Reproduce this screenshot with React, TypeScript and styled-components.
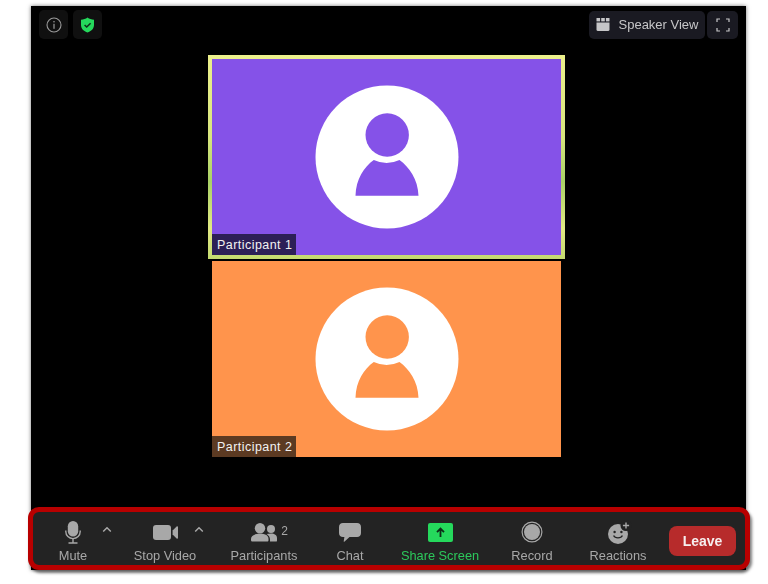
import React from "react";
import styled, { createGlobalStyle } from "styled-components";

const Global = createGlobalStyle`
  html, body { margin: 0; padding: 0; background: #fff; overflow: hidden; }
  body { font-family: "Liberation Sans", Arial, sans-serif; }
`;

const Page = styled.div`
  width: 768px;
  height: 584px;
  padding: 6px 0 0 31px;
  box-sizing: border-box;
  filter: blur(0.3px);
`;

const Window = styled.div`
  width: 715px;
  height: 564px;
  background: #000;
  display: flex;
  flex-direction: column;
  box-shadow: 0 0 4px rgba(0, 0, 0, 0.55);
`;

const TopBar = styled.div`
  display: flex;
  justify-content: space-between;
  padding: 4px 8px 0 8px;
`;

const TopGroup = styled.div`
  display: flex;
  align-items: center;
  gap: 5px;
`;

const TopRightGroup = styled(TopGroup)`
  gap: 2px;
`;

const IconChip = styled.div`
  width: 29px;
  height: 29px;
  border-radius: 5px;
  background: #101010;
  display: flex;
  align-items: center;
  justify-content: center;
`;

const ViewButton = styled.div<{ $w: number }>`
  width: ${(p) => p.$w}px;
  height: 28px;
  border-radius: 5px;
  background: #1a1a22;
  display: flex;
  align-items: center;
  justify-content: center;
  gap: 9px;
  color: #c6c6c8;
  font-size: 13px;
`;

const Stage = styled.div`
  flex: 1;
  display: flex;
  flex-direction: column;
  align-items: center;
  padding: 16px 4px 0 0;
`;

const ActiveFrame = styled.div`
  width: 357px;
  height: 204px;
  padding: 4px;
  box-sizing: border-box;
  background: linear-gradient(180deg, #ecf08c 0%, #d8e67e 40%, #a9d266 62%, #e2ea84 85%, #c4da70 100%);
`;

const Tile = styled.div<{ $bg: string }>`
  position: relative;
  width: 349px;
  height: 196px;
  background: ${(p) => p.$bg};
  display: flex;
  align-items: center;
  justify-content: center;
`;

const PlainTile = styled(Tile)`
  margin-top: 2px;
`;

const Avatar = styled.svg`
  width: 144px;
  height: 144px;
  display: block;
`;

const NameTag = styled.div<{ $bg: string }>`
  position: absolute;
  left: 0;
  bottom: 0;
  height: 21px;
  width: 84px;
  box-sizing: border-box;
  background: ${(p) => p.$bg};
  color: #f2f2f2;
  font-size: 12.5px;
  letter-spacing: 0.45px;
  line-height: 23px;
  padding-left: 5px;
  white-space: nowrap;
`;

const Toolbar = styled.div`
  width: 722px;
  height: 63px;
  margin: 0 0 0 -3px;
  box-sizing: border-box;
  border: 5px solid #b80000;
  border-radius: 11px;
  background: #232323;
  display: flex;
  box-shadow: 2px 3px 3px rgba(0, 0, 0, 0.5);
`;

const Item = styled.div<{ $w: number; $color?: string }>`
  position: relative;
  width: ${(p) => p.$w}px;
  display: flex;
  flex-direction: column;
  align-items: center;
  padding-top: 8px;
  color: ${(p) => p.$color || "#a8a8a8"};
`;

const IconBox = styled.div`
  height: 24px;
  display: flex;
  align-items: center;
  justify-content: center;
`;

const Label = styled.div`
  margin-top: 4px;
  font-size: 12.8px;
  line-height: 15px;
  white-space: nowrap;
`;

const Chevron = styled.svg<{ $left: number }>`
  position: absolute;
  left: ${(p) => p.$left}px;
  top: 14px;
  width: 10px;
  height: 7px;
`;

const Count = styled.span`
  font-size: 12px;
  color: #a8a8a8;
  margin-left: 4px;
  position: relative;
  top: -1px;
`;

const LeaveButton = styled.div`
  width: 67px;
  height: 30px;
  margin: 14px 0 0 6px;
  border-radius: 8px;
  background: #b72b2b;
  color: #f6eeee;
  font-size: 14px;
  font-weight: 700;
  display: flex;
  align-items: center;
  justify-content: center;
`;

const Person = ({ color }: { color: string }) => (
  <Avatar viewBox="0 0 144 144">
    <circle cx="72" cy="72" r="71.5" fill="#fff" />
    <circle cx="72.2" cy="50" r="21.7" fill={color} />
    <path
      d="M40.5 110.7C41 94 49 82 58.8 75Q71.6 81 84.5 75C94 82 103 94 103.5 110.7Z"
      fill={color}
    />
  </Avatar>
);

const Up = ({ left }: { left: number }) => (
  <Chevron $left={left} viewBox="0 0 10 7">
    <path d="M1.2 5.5L5 1.8L8.8 5.5" fill="none" stroke="#a8a8a8" strokeWidth="1.5" />
  </Chevron>
);

export default function App() {
  return (
    <>
      <Global />
      <Page>
        <Window>
          <TopBar>
            <TopGroup>
              <IconChip>
                <svg width="16" height="16" viewBox="0 0 16 16" fill="none">
                  <circle cx="8" cy="8" r="7" stroke="#9a9a9a" strokeWidth="1.1" />
                  <rect x="7.4" y="6.8" width="1.2" height="5" fill="#9a9a9a" />
                  <circle cx="8" cy="4.8" r="0.8" fill="#9a9a9a" />
                </svg>
              </IconChip>
              <IconChip>
                <svg width="15" height="16" viewBox="0 0 15 16">
                  <path
                    d="M7.5 0.6C9.3 2 11.6 2.7 14 2.8V8C14 11.6 11.2 14.3 7.5 15.6C3.8 14.3 1 11.6 1 8V2.8C3.4 2.7 5.7 2 7.5 0.6Z"
                    fill="#25d95c"
                  />
                  <path d="M4.6 8L6.7 10L10.6 6.2" fill="none" stroke="#10301c" strokeWidth="1.6" />
                </svg>
              </IconChip>
            </TopGroup>
            <TopRightGroup>
              <ViewButton $w={116}>
                <svg width="14" height="13" viewBox="0 0 14 13" fill="#c6c6c8">
                  <rect x="0.5" y="0" width="3.6" height="3.4" />
                  <rect x="5.2" y="0" width="3.6" height="3.4" />
                  <rect x="9.9" y="0" width="3.6" height="3.4" />
                  <path d="M0.5 4.6H13.5V11.5Q13.5 13 12 13H2Q0.5 13 0.5 11.5Z" />
                </svg>
                <span>Speaker View</span>
              </ViewButton>
              <ViewButton $w={31}>
                <svg width="14" height="14" viewBox="0 0 14 14" fill="none" stroke="#c6c6c8" strokeWidth="1.2">
                  <path d="M1 4V1H4M10 1H13V4M13 10V13H10M4 13H1V10" />
                </svg>
              </ViewButton>
            </TopRightGroup>
          </TopBar>
          <Stage>
            <ActiveFrame>
              <Tile $bg="#8552e8">
                <Person color="#8552e8" />
                <NameTag $bg="#2d1f57">Participant 1</NameTag>
              </Tile>
            </ActiveFrame>
            <PlainTile $bg="#ff944c">
              <Person color="#ff944c" />
              <NameTag $bg="#5c3a22">Participant 2</NameTag>
            </PlainTile>
          </Stage>
          <Toolbar>
            <Item $w={80}>
              <IconBox>
                <svg width="16" height="23" viewBox="0 0 16 23" fill="none">
                  <rect x="2.8" y="0" width="10.4" height="15.5" rx="5.2" fill="#a8a8a8" />
                  <path d="M0.8 9.5V10.5C0.8 14.6 3.9 17.6 8 17.6C12.1 17.6 15.2 14.6 15.2 10.5V9.5" stroke="#a8a8a8" strokeWidth="1.4" />
                  <path d="M8 17.6V21.6M3.5 22H12.5" stroke="#a8a8a8" strokeWidth="1.4" />
                </svg>
              </IconBox>
              <Label>Mute</Label>
              <Up left={69} />
            </Item>
            <Item $w={104}>
              <IconBox>
                <svg width="25" height="15" viewBox="0 0 25 15" fill="#a8a8a8">
                  <rect x="0" y="0" width="18" height="15" rx="3" />
                  <path d="M19.6 5.6L23.6 1.4C24.1 0.9 25 1.2 25 2V13C25 13.8 24.1 14.1 23.6 13.6L19.6 9.4Z" />
                </svg>
              </IconBox>
              <Label>Stop Video</Label>
              <Up left={81} />
            </Item>
            <Item $w={94}>
              <IconBox>
                <svg width="26" height="19" viewBox="0 0 26 19" fill="#a8a8a8" style={{ marginLeft: 11 }}>
                  <circle cx="9" cy="5.2" r="5.2" />
                  <circle cx="20" cy="6" r="4" />
                  <path d="M0 16C0 12.5 4 10.8 9 10.8C14.5 10.8 17.5 12.5 17.5 16V17C17.5 18 17 18.6 16 18.6H1.6C0.6 18.6 0 18 0 17Z" />
                  <path d="M15.5 11C17 10.6 18.5 10.4 20 10.4C23.5 10.4 26 12 26 15V17.4C26 18.2 25.5 18.6 24.8 18.6H19C19.2 16 19 13 15.5 11Z" />
                </svg>
                <Count>2</Count>
              </IconBox>
              <Label>Participants</Label>
            </Item>
            <Item $w={78}>
              <IconBox>
                <svg width="22" height="19" viewBox="0 0 22 19" fill="#a8a8a8">
                  <path d="M4 0H18C20.4 0 22 1.6 22 4V10C22 12.4 20.4 14 18 14H10.5L5.6 18.6C5.2 19 4.6 18.7 4.7 18.2L5.4 14H4C1.6 14 0 12.4 0 10V4C0 1.6 1.6 0 4 0Z" />
                </svg>
              </IconBox>
              <Label>Chat</Label>
            </Item>
            <Item $w={102} $color="#2cc95c">
              <IconBox>
                <svg width="25" height="19" viewBox="0 0 25 19">
                  <rect width="25" height="19" rx="2" fill="#25d95c" />
                  <path d="M12.5 14V6.2M9 9.2L12.5 5.6L16 9.2" fill="none" stroke="#0e2c18" strokeWidth="1.8" />
                </svg>
              </IconBox>
              <Label>Share Screen</Label>
            </Item>
            <Item $w={82}>
              <IconBox>
                <svg width="22" height="22" viewBox="0 0 22 22">
                  <circle cx="11" cy="11" r="9.9" fill="none" stroke="#a8a8a8" strokeWidth="1.2" />
                  <circle cx="11" cy="11" r="8" fill="#a8a8a8" />
                </svg>
              </IconBox>
              <Label>Record</Label>
            </Item>
            <Item $w={90}>
              <IconBox>
                <svg width="24" height="24" viewBox="0 0 24 24" style={{ marginLeft: 3 }}>
                  <circle cx="10" cy="14" r="10" fill="#a8a8a8" />
                  <circle cx="18" cy="5.5" r="5.5" fill="#232323" />
                  <path d="M18 2.4V8.6M14.9 5.5H21.1" stroke="#a8a8a8" strokeWidth="1.4" />
                  <circle cx="6.6" cy="12" r="1.2" fill="#232323" />
                  <circle cx="13.4" cy="12" r="1.2" fill="#232323" />
                  <path d="M5.6 15.6C7 18.6 13 18.6 14.4 15.6" fill="none" stroke="#232323" strokeWidth="1.3" />
                </svg>
              </IconBox>
              <Label>Reactions</Label>
            </Item>
            <LeaveButton>Leave</LeaveButton>
          </Toolbar>
        </Window>
      </Page>
    </>
  );
}
